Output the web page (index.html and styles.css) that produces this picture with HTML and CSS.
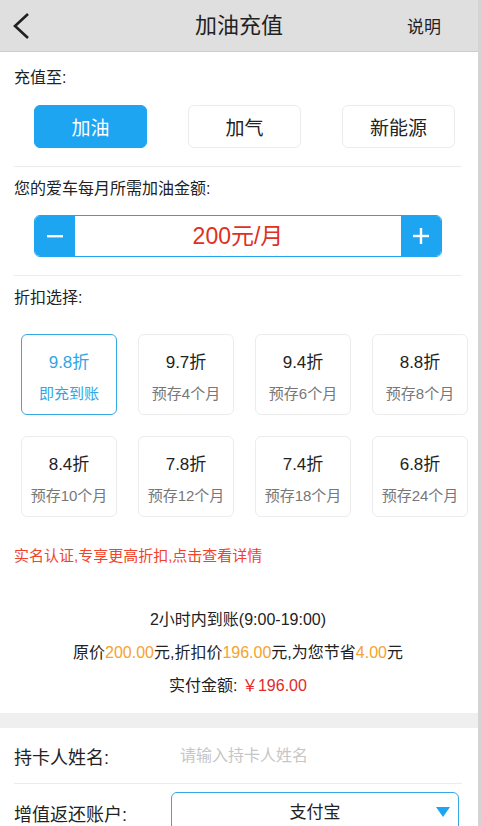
FILE: index.html
```html
<!DOCTYPE html>
<html lang="zh-CN">
<head>
    <meta charset="UTF-8">
    <meta name="viewport" content="width=device-width, initial-scale=1.0">
    <title>加油充值</title>
    <link rel="stylesheet" href="styles.css">
</head>
<body>
    <div class="page">
        <header class="topbar">
            <a class="back" href="#">
                <svg width="20" height="30" viewBox="0 0 20 30">
                    <polyline points="16,3 3,15 16,27" fill="none" stroke="#1f1f1f" stroke-width="2.6" stroke-linejoin="miter"/>
                </svg>
            </a>
            <h1>加油充值</h1>
            <a class="help" href="#">说明</a>
        </header>

        <section class="block">
            <div class="label">充值至:</div>
            <div class="types">
                <button class="type active">加油</button>
                <button class="type">加气</button>
                <button class="type">新能源</button>
            </div>
        </section>

        <section class="block">
            <div class="label">您的爱车每月所需加油金额:</div>
            <div class="stepper">
                <button class="step">
                    <svg width="18" height="18" viewBox="0 0 18 18"><rect x="1" y="8" width="16" height="2.4" fill="#fff"/></svg>
                </button>
                <div class="amount">200元/月</div>
                <button class="step">
                    <svg width="18" height="18" viewBox="0 0 18 18"><rect x="1" y="7.8" width="16" height="2.4" fill="#fff"/><rect x="7.8" y="1" width="2.4" height="16" fill="#fff"/></svg>
                </button>
            </div>
        </section>

        <section class="block last">
            <div class="label">折扣选择:</div>
            <div class="discounts">
                <div class="card active"><div class="rate">9.8折</div><div class="term">即充到账</div></div>
                <div class="card"><div class="rate">9.7折</div><div class="term">预存4个月</div></div>
                <div class="card"><div class="rate">9.4折</div><div class="term">预存6个月</div></div>
                <div class="card"><div class="rate">8.8折</div><div class="term">预存8个月</div></div>
                <div class="card"><div class="rate">8.4折</div><div class="term">预存10个月</div></div>
                <div class="card"><div class="rate">7.8折</div><div class="term">预存12个月</div></div>
                <div class="card"><div class="rate">7.4折</div><div class="term">预存18个月</div></div>
                <div class="card"><div class="rate">6.8折</div><div class="term">预存24个月</div></div>
            </div>
            <a class="notice" href="#">实名认证,专享更高折扣,点击查看详情</a>
            <div class="summary">
                <p>2小时内到账(9:00-19:00)</p>
                <p>原价<span class="orange">200.00</span>元,折扣价<span class="orange">196.00</span>元,为您节省<span class="orange">4.00</span>元</p>
                <p>实付金额: <span class="red">￥196.00</span></p>
            </div>
        </section>

        <div class="gap"></div>

        <div class="form">
            <div class="row">
                <span class="row-label">持卡人姓名:</span>
                <input class="name-input" type="text" placeholder="请输入持卡人姓名">
            </div>
            <div class="row">
                <span class="row-label">增值返还账户:</span>
                <div class="select">
                    <span>支付宝</span>
                    <svg class="caret" width="14" height="10" viewBox="0 0 14 10"><polygon points="0,0 14,0 7,10" fill="#1ea5f2"/></svg>
                </div>
            </div>
        </div>
    </div>
</body>
</html>
```

FILE: styles.css
```css
body {
    margin: 0;
    background: #d4d4d4;
    font-family: "Liberation Sans", "Noto Sans CJK SC", sans-serif;
    color: #222;
}
.page {
    width: 478px;
    height: 826px;
    overflow: hidden;
    background: #fff;
}
.topbar {
    height: 51px;
    background: #dfdfdf;
    border-bottom: 1px solid #cdcdcd;
    display: flex;
    align-items: center;
    position: relative;
}
.back {
    display: flex;
    margin-left: 12px;
}
.topbar h1 {
    position: absolute;
    left: 0;
    right: 0;
    margin: 0;
    text-align: center;
    font-size: 22px;
    font-weight: normal;
    line-height: 51px;
    pointer-events: none;
}
.help {
    margin-left: auto;
    margin-right: 37px;
    color: #222;
    text-decoration: none;
    font-size: 17px;
}
.block {
    margin: 0 16px 0 14px;
    border-bottom: 1px solid #ececec;
    padding-bottom: 18px;
}
.block.last {
    border-bottom: none;
    padding-bottom: 11px;
}
.label {
    font-size: 16px;
    line-height: 22px;
    padding-top: 11px;
}
.block:first-of-type .label {
    padding-top: 15px;
}
.types {
    display: flex;
    justify-content: space-between;
    padding: 0 7px 0 20px;
    margin-top: 16px;
}
.type {
    width: 113px;
    height: 43px;
    border: 1px solid #ececec;
    border-radius: 6px;
    background: #fff;
    font-family: inherit;
    font-size: 19px;
    color: #222;
}
.type.active {
    background: #1ea5f2;
    border-color: #1ea5f2;
    color: #fff;
}
.stepper {
    display: flex;
    height: 40px;
    margin: 15px 20px 0 20px;
    border: 1px solid #1ea5f2;
    border-radius: 6px;
    overflow: hidden;
}
.step {
    width: 40px;
    border: none;
    background: #1ea5f2;
    display: flex;
    align-items: center;
    justify-content: center;
    padding: 0;
}
.amount {
    flex: 1;
    text-align: center;
    line-height: 40px;
    font-size: 23px;
    color: #e0301e;
}
.discounts {
    display: grid;
    grid-template-columns: repeat(4, 96px);
    gap: 21px;
    margin: 25px 0 0 7px;
    width: 447px;
}
.card {
    height: 81px;
    box-sizing: border-box;
    padding-top: 6px;
    border: 1px solid #ececec;
    border-radius: 6px;
    display: flex;
    flex-direction: column;
    align-items: center;
    justify-content: center;
}
.card.active {
    border-color: #34a9e4;
}
.rate {
    font-size: 17px;
    line-height: 24px;
}
.term {
    font-size: 15px;
    line-height: 22px;
    margin-top: 8px;
    color: #777;
}
.card.active .rate,
.card.active .term {
    color: #2fa6e6;
}
.notice {
    display: block;
    margin-top: 28px;
    font-size: 15px;
    line-height: 22px;
    color: #f0432a;
    text-decoration: none;
}
.summary {
    margin-top: 36px;
    text-align: center;
    font-size: 16px;
}
.summary p {
    margin: 0;
    line-height: 33px;
}
.orange {
    color: #f5a32c;
}
.red {
    color: #e02a2a;
}
.gap {
    height: 15px;
    background: #efefef;
}
.form {
    margin: 0 16px 0 14px;
}
.row {
    display: flex;
    align-items: center;
    height: 55px;
    border-bottom: 1px solid #ececec;
}
.row-label {
    width: 157px;
    font-size: 18px;
}
.name-input {
    border: none;
    outline: none;
    font-family: inherit;
    font-size: 16px;
    padding: 0;
    margin-left: 9px;
    flex: 1;
}
.name-input::placeholder {
    color: #c6c6c6;
}
.row:last-child {
    align-items: flex-start;
    border-bottom: none;
}
.row:last-child .row-label {
    margin-top: 16px;
}
.select {
    position: relative;
    flex: 1;
    height: 44px;
    margin: 8px 3px 0 0;
    border: 1px solid #34a9e4;
    border-radius: 6px;
    text-align: center;
    font-size: 17px;
    line-height: 40px;
}
.caret {
    position: absolute;
    right: 8px;
    top: 14px;
}
```
